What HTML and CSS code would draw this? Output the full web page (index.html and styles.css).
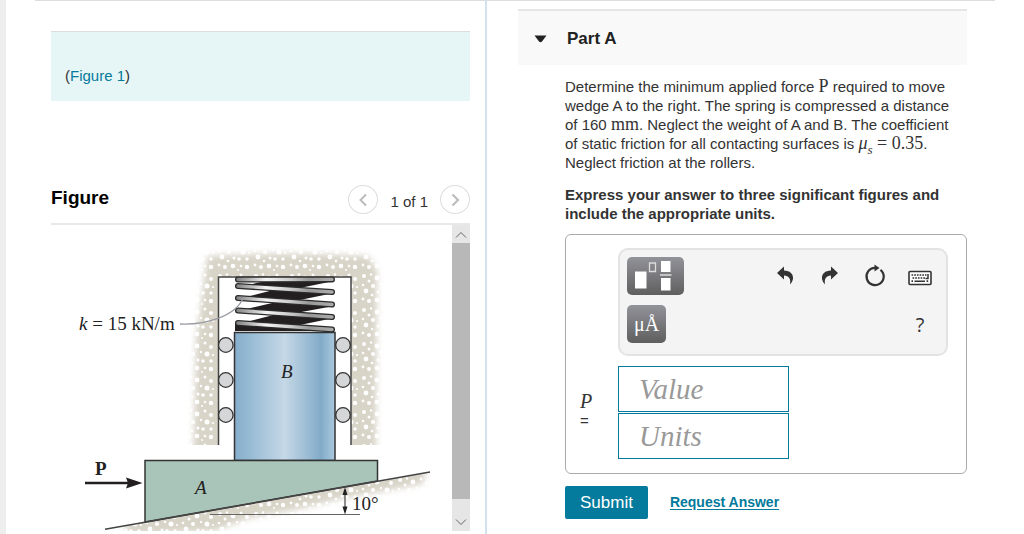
FILE: index.html
```html
<!DOCTYPE html>
<html lang="en">
<head>
    <meta charset="UTF-8">
    <meta name="viewport" content="width=device-width, initial-scale=1.0">
    <title>Part A</title>
    <link rel="stylesheet" href="styles.css">
</head>
<body>
    <div class="page">
        <section class="left-pane">
            <div class="intro">(<a href="#figure">Figure 1</a>)</div>

            <div class="figure-header" id="figure">
                <h2>Figure</h2>
                <div class="pager">
                    <button class="pager-button" aria-label="Previous figure">
                        <svg width="12" height="14" viewBox="0 0 12 14"><path d="M9 1.5 3.5 7 9 12.5"/></svg>
                    </button>
                    <span>1 of 1</span>
                    <button class="pager-button" aria-label="Next figure">
                        <svg width="12" height="14" viewBox="0 0 12 14"><path d="M3.5 1.5 9 7 3.5 12.5"/></svg>
                    </button>
                </div>
            </div>

            <div class="figure-view">
                <svg class="diagram" viewBox="51 225 401 306" role="img" aria-label="Spring, block B and wedge A">
                    <defs>
                        <pattern id="gravel" width="36" height="34" patternUnits="userSpaceOnUse">
                            <rect width="36" height="34" fill="#d8d4c8"/>
                            <g fill="#fff">
                                <circle cx="4" cy="4" r="2"/><circle cx="11" cy="2.5" r="1.2"/>
                                <circle cx="17" cy="6" r="2.4"/><circle cx="25" cy="3" r="1.5"/>
                                <circle cx="31" cy="7" r="2"/><circle cx="9" cy="9" r="1.5"/>
                                <circle cx="3" cy="13" r="1.3"/><circle cx="13" cy="14" r="2.1"/>
                                <circle cx="21" cy="12" r="1.2"/><circle cx="27" cy="14" r="2.5"/>
                                <circle cx="33" cy="15" r="1.1"/><circle cx="6" cy="19" r="2.4"/>
                                <circle cx="18" cy="20" r="1.5"/><circle cx="23" cy="21" r="1.8"/>
                                <circle cx="31" cy="21" r="1.7"/><circle cx="12" cy="23" r="1.3"/>
                                <circle cx="3" cy="27" r="1.4"/><circle cx="9" cy="29" r="2"/>
                                <circle cx="17" cy="28" r="2.3"/><circle cx="25" cy="28" r="1.3"/>
                                <circle cx="31" cy="29" r="2.2"/><circle cx="22" cy="32" r="1"/>
                            </g>
                        </pattern>
                        <filter id="soften" x="-20%" y="-20%" width="140%" height="140%">
                            <feGaussianBlur stdDeviation="3"/>
                        </filter>
                        <mask id="wallFade" maskUnits="userSpaceOnUse" x="180" y="240" width="210" height="205">
                            <path d="M207 256 Q290 251 368 256 L377 270 376 460H193L196 340Z" fill="#fff" filter="url(#soften)"/>
                        </mask>
                        <mask id="groundFade" maskUnits="userSpaceOnUse" x="100" y="465" width="335" height="66">
                            <path d="M122 522 426 468 423 484 380 492 340 499 300 509 250 518 215 531 130 535Z" fill="#fff" filter="url(#soften)"/>
                        </mask>
                        <linearGradient id="block">
                            <stop offset="0" stop-color="#85adca"/>
                            <stop offset="0.2" stop-color="#9dbfd7"/>
                            <stop offset="0.5" stop-color="#c5d8e6"/>
                            <stop offset="0.86" stop-color="#82abc9"/>
                            <stop offset="1" stop-color="#abc9de"/>
                        </linearGradient>
                        <linearGradient id="coil" gradientUnits="userSpaceOnUse" x1="238" y1="0" x2="332" y2="0">
                            <stop offset="0" stop-color="#888"/>
                            <stop offset="0.3" stop-color="#f4f4f4"/>
                            <stop offset="0.55" stop-color="#ccc"/>
                            <stop offset="0.75" stop-color="#999"/>
                            <stop offset="1" stop-color="#aaa"/>
                        </linearGradient>
                    </defs>

                    <!-- walls -->
                    <rect x="180" y="240" width="210" height="205" fill="url(#gravel)" mask="url(#wallFade)"/>
                    <rect x="218" y="277" width="133" height="170" fill="#fff"/>
                    <path d="M218.5 445V277H351V445" fill="none" stroke="#444" stroke-width="1.5"/>

                    <!-- spring -->
                    <g fill="#231f20">
                        <path d="M334 281 285 277 238 287 285 291Z"/>
                        <path d="M334 293 285 287 238 299 285 303Z"/>
                        <path d="M334 306 285 300 238 311 285 315Z"/>
                        <path d="M334 318 285 312 238 324 285 328Z"/>
                        <path d="M235 323 334 331H235Z"/>
                    </g>
                    <g fill="none" stroke-linecap="round">
                        <path d="M238 279.5 332 279.4M238 286 332 292M238 298 332 304.5M238 310.5 332 317M238 323 332 329.5" stroke="#2b2b2b" stroke-width="6"/>
                        <path d="M238 279.5 332 279.4M238 286 332 292M238 298 332 304.5M238 310.5 332 317M238 323 332 329.5" stroke="url(#coil)" stroke-width="3.4"/>
                    </g>

                    <!-- rollers and block B -->
                    <g fill="#d5d6d8" stroke="#333" stroke-width="1.3">
                        <circle cx="225.8" cy="345" r="7.3"/><circle cx="225.8" cy="380" r="7.3"/><circle cx="225.8" cy="415" r="7.3"/>
                        <circle cx="343" cy="345" r="7.3"/><circle cx="343" cy="380" r="7.3"/><circle cx="343" cy="415" r="7.3"/>
                    </g>
                    <rect x="234.5" y="332.5" width="100.5" height="128" fill="url(#block)" stroke="#333" stroke-width="1.5"/>

                    <!-- ground and wedge A -->
                    <path d="M100 530.5 430 472V531H100Z" fill="url(#gravel)" mask="url(#groundFade)"/>
                    <path d="M145 460.5H377.5V481L145 522Z" fill="#a9c4b8" stroke="#333" stroke-width="1.5"/>
                    <path d="M105 529.3 430 472" stroke="#444" stroke-width="1.5"/>
                    <path d="M210 514.5H360" stroke="#666"/>
                    <path d="M345 490V512" stroke="#222"/>
                    <path d="M345 487 342.5 495H347.5ZM345 514.5 342.5 506.5H347.5Z" fill="#222"/>

                    <path d="M180 324C206 325 236 316 243 298" fill="none" stroke="#999ba3" stroke-width="1.3"/>
                    <path d="M85 483H130" stroke="#231f20" stroke-width="2.6"/>
                    <path d="M142.5 483 126 477.5 128 483 126 488.5Z" fill="#231f20"/>

                    <g class="diagram-text">
                        <text x="79" y="330"><tspan font-style="italic">k</tspan> = 15 kN/m</text>
                        <text x="281" y="378" font-style="italic">B</text>
                        <text x="195" y="494" font-style="italic">A</text>
                        <text x="95" y="475" font-weight="bold">P</text>
                        <text x="352" y="510">10°</text>
                    </g>
                </svg>
                <div class="scrollbar">
                    <button class="scroll-up" aria-label="Scroll up">
                        <svg width="12" height="8" viewBox="0 0 12 8"><path d="M1 6.5 6 1.5 11 6.5"/></svg>
                    </button>
                    <div class="scroll-thumb"></div>
                    <button class="scroll-down" aria-label="Scroll down">
                        <svg width="12" height="8" viewBox="0 0 12 8"><path d="M1 1.5 6 6.5 11 1.5"/></svg>
                    </button>
                </div>
            </div>
        </section>

        <main class="right-pane">
            <div class="part-header">
                <svg width="13" height="8" viewBox="0 0 13 8"><path d="M0.5 0.5H12.5L8 6.5Q6.5 8 5 6.5Z" fill="#222"/></svg>
                <h1>Part A</h1>
            </div>

            <div class="part-body">
                <p class="question">Determine the minimum applied force <span class="math">P</span> required to move wedge A to the right. The spring is compressed a distance of 160 <span class="math">mm</span>. Neglect the weight of A and B. The coefficient of static friction for all contacting surfaces is <span class="math"><i>μ<sub>s</sub></i> = 0.35</span>. Neglect friction at the rollers.</p>
                <p class="instructions">Express your answer to three significant figures and include the appropriate units.</p>

                <form class="answer">
                    <div class="answer-box">
                        <div class="toolbar">
                            <div class="toolbar-row">
                                <button type="button" class="tool-button" aria-label="Templates">
                                    <svg width="57" height="38" viewBox="0 0 57 38">
                                        <path d="M8 14.5H19.5V31.500H8ZM34 4H43.5V15H34ZM34 21H43.5V33.500H34Z" fill="#fff"/>
                                        <path d="M22.5 6H28.5V14.5H22.5Z" fill="none" stroke="#ddd" stroke-width="1.3"/>
                                        <path d="M33 18H44.5" stroke="#ddd" stroke-width="1.5"/>
                                    </svg>
                                </button>
                                <div class="tools">
                                    <button type="button" class="icon-button" aria-label="Undo">
                                        <svg width="20" height="20" viewBox="0 0 20 20"><path d="M2 7 9 0.5V4.500C15 4.500 18.500 8 18 13Q17.500 16 15 18.500C16 13 14 9.500 9 9.500V13.500Z" fill="#333"/></svg>
                                    </button>
                                    <button type="button" class="icon-button" aria-label="Redo">
                                        <svg width="20" height="20" viewBox="0 0 20 20"><path d="M18 7 11 0.5V4.500C5 4.500 1.500 8 2 13Q2.500 16 5 18.500C4 13 6 9.500 11 9.500V13.500Z" fill="#333"/></svg>
                                    </button>
                                    <button type="button" class="icon-button" aria-label="Reset">
                                        <svg width="22" height="24" viewBox="0 0 22 24"><path d="M16.5 5.8A8.6 8.6 0 1 1 11 3.900" fill="none" stroke="#333" stroke-width="2.2"/><path d="M10.500 0.5 15.500 4 10.500 7.500Z" fill="#333"/></svg>
                                    </button>
                                    <button type="button" class="icon-button" aria-label="Keyboard shortcuts">
                                        <svg class="keyboard" width="24" height="16" viewBox="0 0 24 16">
                                            <rect x="1" y="1.5" width="22" height="13" rx="1" fill="#fff" stroke="#333" stroke-width="1.6"/>
                                            <path d="M3.5 5H18.5M4.500 8H17M3.5 11.2H5M18.5 11.2H20.5" stroke="#333" stroke-width="1.7" stroke-dasharray="1.7 1"/>
                                            <path d="M6.5 11.3H17M20 4V8.5H17.5" fill="none" stroke="#333" stroke-width="1.5"/>
                                        </svg>
                                    </button>
                                </div>
                            </div>
                            <div class="toolbar-row">
                                <button type="button" class="tool-button units-button">μÅ</button>
                                <button type="button" class="icon-button help">?</button>
                            </div>
                        </div>
                        <label for="value"><i>P</i><span>=</span></label>
                        <div class="fields">
                            <input type="text" id="value" placeholder="Value">
                            <input type="text" id="units" placeholder="Units" aria-label="Units">
                        </div>
                    </div>
                    <div class="actions">
                        <button type="button" class="submit">Submit</button>
                        <a href="#answer">Request Answer</a>
                    </div>
                </form>
            </div>
        </main>
    </div>
</body>
</html>
```
FILE: styles.css
```css
* {
    margin: 0;
    padding: 0;
    box-sizing: border-box;
}

body {
    background-color: #fff;
    color: #333;
    font-family: "Liberation Sans", Arial, sans-serif;
    font-size: 15px;
    line-height: 19px;
}

button {
    border: none;
    background: none;
    font-family: inherit;
    cursor: pointer;
}

a {
    color: #047a9c;
}

.page {
    display: grid;
    grid-template-columns: 481fr 537fr;
    min-height: 100vh;
    border-left: 6px solid #eee;
}

.left-pane {
    margin-left: 29px;
    padding: 30px 15px 0 16px;
    border-top: 1px solid #ddd;
    border-right: 2px solid #d3e1ee;
}

.intro {
    padding: 34px 14px 16px;
    background-color: #e6f6f6;
    border-top: 1px solid #ddd;
}

.intro a {
    text-decoration: none;
}

.figure-header {
    display: flex;
    justify-content: space-between;
    margin-top: 84px;
    padding-bottom: 9px;
    border-bottom: 2px solid #e8e8e8;
}

.figure-header h2 {
    padding-top: 3px;
    color: #000;
    font-size: 19px;
}

.pager {
    display: flex;
    align-items: center;
    gap: 12px;
}

.pager span {
    padding-top: 4px;
}

.pager-button {
    display: flex;
    align-items: center;
    justify-content: center;
    width: 30px;
    height: 29px;
    border: 1px solid #ddd;
    border-radius: 50%;
}

.pager-button path {
    fill: none;
    stroke: #bbb;
    stroke-width: 2;
}

.figure-view {
    display: flex;
}

.diagram {
    flex: 1;
    min-width: 0;
}

.diagram-text {
    fill: #222;
    font-family: "Liberation Serif", "Times New Roman", serif;
    font-size: 19px;
}

.scrollbar {
    display: flex;
    flex-direction: column;
    width: 18px;
    background-color: #e6e6e6;
}

.scroll-thumb {
    flex: 1;
    background-color: #b8b8b8;
}

.scroll-up {
    height: 18px;
}

.scroll-down {
    height: 32px;
    padding-top: 12px;
}

.scrollbar path {
    fill: none;
    stroke: #666;
}

.right-pane {
    margin-right: 29px;
    padding: 8px 28px 0 31px;
    border-top: 1px solid #ddd;
}

.part-header {
    display: flex;
    align-items: center;
    gap: 20px;
    padding: 18px 16px 17px;
    background-color: #f9f9f9;
    border-top: 2px solid #e6e6e6;
}

.part-header h1 {
    color: #222;
    font-size: 17px;
}

.part-body {
    padding: 12px 0 0 47px;
}

.question {
    padding-right: 8px;
}

.math {
    font-family: "Liberation Serif", "Times New Roman", serif;
    font-size: 18px;
    line-height: 1;
}

.math sub {
    font-size: 13px;
    line-height: 0;
}

.instructions {
    margin-top: 13px;
    font-weight: bold;
}

.answer-box {
    display: grid;
    grid-template-columns: 52px 1fr;
    row-gap: 10px;
    margin-top: 11px;
    padding: 13px 18px 14px 0;
    border: 1px solid #aaa;
    border-radius: 6px;
}

.toolbar {
    grid-column: 2;
    display: flex;
    flex-direction: column;
    gap: 10px;
    padding: 7px 14px 11px 7px;
    background-color: #f4f4f4;
    border: 2px solid #e3e3e3;
    border-radius: 10px;
}

.toolbar-row,
.tools {
    display: flex;
    align-items: center;
    justify-content: space-between;
}

.tools {
    gap: 21px;
}

.tool-button {
    height: 38px;
    border-radius: 5px;
    background: linear-gradient(#92929a, #5f5f5f);
    color: #fff;
}

.tool-button svg {
    display: block;
}

.units-button {
    width: 39px;
    font-family: "Liberation Serif", "Times New Roman", serif;
    font-size: 20px;
}

.icon-button {
    display: flex;
    align-items: center;
    justify-content: center;
    width: 24px;
    height: 24px;
}

.keyboard {
    margin-top: 4px;
}

.help {
    color: #333;
    font-family: "Open Sans", sans-serif;
    font-size: 20px;
}

.answer-box label {
    display: flex;
    flex-direction: column;
    padding: 26px 0 0 14px;
}

.answer-box label i {
    font-family: "Liberation Serif", "Times New Roman", serif;
    font-size: 20px;
}

.fields {
    display: flex;
    flex-direction: column;
    align-items: flex-start;
    gap: 1px;
}

.fields input {
    width: 171px;
    height: 46px;
    padding: 0 20px;
    border: 1px solid #047a9c;
    font-family: "Liberation Serif", "Times New Roman", serif;
    font-size: 29px;
}

.fields input::placeholder {
    color: #999;
    font-style: italic;
}

.actions {
    display: flex;
    align-items: center;
    gap: 22px;
    margin-top: 12px;
}

.submit {
    height: 33px;
    padding: 0 15px;
    border-radius: 2px;
    background-color: #047a9c;
    color: #fff;
    font-size: 17px;
}

.actions a {
    font-size: 14px;
    font-weight: bold;
    text-underline-offset: 2px;
}
```
